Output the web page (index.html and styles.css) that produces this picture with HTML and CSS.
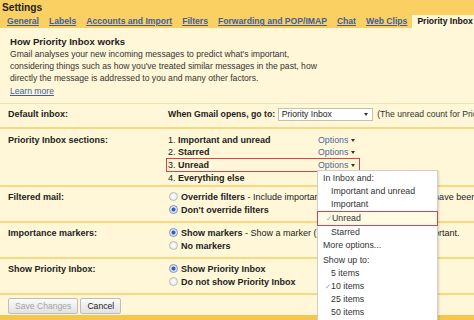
FILE: index.html
```html
<!DOCTYPE html>
<html lang="en">
<head>
    <meta charset="UTF-8">
    <meta name="viewport" content="width=device-width, initial-scale=1.0">
    <title>Settings - Priority Inbox</title>
    <link rel="stylesheet" href="styles.css">
</head>
<body>
<div class="page">
    <div class="header">
        <div class="title">Settings</div>
        <div class="tabs">
            <a class="tab" href="#">General</a>
            <a class="tab" href="#">Labels</a>
            <a class="tab" href="#">Accounts and Import</a>
            <a class="tab" href="#">Filters</a>
            <a class="tab" href="#">Forwarding and POP/IMAP</a>
            <a class="tab" href="#">Chat</a>
            <a class="tab" href="#">Web Clips</a>
            <span class="tab current">Priority Inbox</span>
        </div>
    </div>

    <div class="content">
        <div class="intro">
            <h2>How Priority Inbox works</h2>
            <p>Gmail analyses your new incoming messages to predict what's important, considering things such as how you've treated similar messages in the past, how directly the message is addressed to you and many other factors.</p>
            <a href="#">Learn more</a>
        </div>

        <div class="row default-row">
            <div class="label">Default inbox:</div>
            <div class="value">
                <b class="go-to">When Gmail opens, go to:</b>
                <span class="select">Priority Inbox<span class="caret"></span></span>
                <span class="note">(The unread count for Priority Inbox will be shown in the title bar)</span>
            </div>
        </div>

        <div class="row sections-row">
            <div class="label">Priority Inbox sections:</div>
            <div class="value">
                <div class="section-item">
                    <span class="name">1. <b>Important and unread</b></span>
                    <a class="options" href="#">Options<span class="caret"></span></a>
                </div>
                <div class="section-item">
                    <span class="name">2. <b>Starred</b></span>
                    <a class="options" href="#">Options<span class="caret"></span></a>
                </div>
                <div class="section-item marked">
                    <span class="name">3. <b>Unread</b></span>
                    <a class="options" href="#">Options<span class="caret"></span></a>
                    <div class="menu">
                        <div class="menu-head">In Inbox and:</div>
                        <div class="menu-item">Important and unread</div>
                        <div class="menu-item">Important</div>
                        <div class="menu-item checked selected">Unread</div>
                        <div class="menu-item">Starred</div>
                        <div class="menu-head">More options...</div>
                        <div class="menu-head spaced">Show up to:</div>
                        <div class="menu-item">5 items</div>
                        <div class="menu-item checked">10 items</div>
                        <div class="menu-item">25 items</div>
                        <div class="menu-item">50 items</div>
                    </div>
                </div>
                <div class="section-item">
                    <span class="name">4. <b>Everything else</b></span>
                </div>
            </div>
        </div>

        <div class="row">
            <div class="label">Filtered mail:</div>
            <div class="value">
                <div><span class="radio"></span><b>Override filters</b> - Include important mail in your inbox that may have been filtered out of the inbox</div>
                <div><span class="radio on"></span><b>Don't override filters</b></div>
            </div>
        </div>

        <div class="row">
            <div class="label">Importance markers:</div>
            <div class="value">
                <div><span class="radio on"></span><b>Show markers</b> - Show a marker ( <svg class="marker" width="7" height="7" viewBox="0 0 7 7"><path d="M0 0H4.5L7 3.5L4.5 7H0L2 3.5Z" fill="#f3c13a"/></svg>) by messages marked important.</div>
                <div><span class="radio"></span><b>No markers</b></div>
            </div>
        </div>

        <div class="row">
            <div class="label">Show Priority Inbox:</div>
            <div class="value">
                <div><span class="radio on"></span><b>Show Priority Inbox</b></div>
                <div><span class="radio"></span><b>Do not show Priority Inbox</b></div>
            </div>
        </div>

        <div class="actions">
            <button type="button" class="btn" disabled>Save Changes</button>
            <button type="button" class="btn">Cancel</button>
        </div>
    </div>

    <div class="bottom-bar"></div>
</div>
</body>
</html>
```

FILE: styles.css
```css
body {
    margin: 0;
    font-family: "Liberation Sans", Arial, sans-serif;
    color: #222;
    background: #fff7d7;
}
.page {
    width: 474px;
    height: 320px;
    overflow: hidden;
    display: flex;
    flex-direction: column;
}
.header {
    background: #fad063;
    height: 28px;
    flex-shrink: 0;
}
.title {
    font-size: 10.2px;
    font-weight: bold;
    line-height: 12px;
    height: 13px;
    padding: 2px 0 0 2px;
}
.tabs {
    display: flex;
    height: 13px;
    line-height: 13px;
    padding-left: 2px;
    font-size: 8.6px;
    font-weight: bold;
    white-space: nowrap;
}
.tab {
    padding: 0 5px;
    color: #3f5f9c;
    text-decoration: underline;
}
.tab.current {
    background: #fff7d7;
    color: #111;
    text-decoration: none;
}
.content {
    flex: 1;
    background: #fff7d7;
}
.intro {
    padding: 8px 0 6px 10px;
    border-bottom: 1px solid #f2e2b0;
    font-size: 8.6px;
    line-height: 12px;
}
.intro h2 {
    margin: 0;
    font-size: 9.6px;
    line-height: 12px;
}
.intro p {
    margin: 0;
    width: 322px;
    color: #333;
}
.intro a {
    display: inline-block;
    margin-top: 1px;
    color: #3f5f9c;
}
.row {
    display: flex;
    padding: 4px 0 4px 8px;
    border-bottom: 2px solid #f8d97f;
    font-size: 9px;
    line-height: 13px;
}
.label {
    width: 160px;
    flex-shrink: 0;
    font-weight: bold;
}
.value {
    flex: 1;
    min-width: 0;
    white-space: nowrap;
}
.default-row {
    padding: 3px 0 6px 8px;
    line-height: 14px;
}
.go-to {
    font-size: 8.7px;
}
.select {
    display: inline-block;
    width: 90px;
    height: 11px;
    line-height: 11px;
    padding-left: 3px;
    background: #fff;
    border: 1px solid #c9c1a6;
    font-size: 8.6px;
    vertical-align: middle;
    position: relative;
}
.select .caret {
    position: absolute;
    right: 4px;
    top: 4px;
}
.note {
    font-size: 8.6px;
    margin-left: 2px;
    color: #333;
}
.caret {
    display: inline-block;
    border: 2px solid transparent;
    border-top: 3px solid #333;
    border-bottom: 0;
    margin-left: 3px;
    vertical-align: middle;
}
.sections-row {
    padding: 5px 0 1px 8px;
    line-height: 12px;
}
.section-item {
    display: flex;
    width: 189px;
}
.section-item .name {
    width: 150px;
    flex-shrink: 0;
}
.section-item.marked {
    position: relative;
    width: 191px;
    margin-left: -2px;
    padding-left: 1px;
    border: 1px solid #d8434c;
}
.options {
    color: #4a67a3;
    text-decoration: none;
    font-size: 8.8px;
}
.menu {
    position: absolute;
    left: 150px;
    top: 11px;
    width: 119px;
    height: 160px;
    padding-top: 1px;
    background: #fff;
    border: 1px solid #cfcfcf;
    box-shadow: 1px 1px 2px rgba(0, 0, 0, 0.15);
    font-size: 8.8px;
    line-height: 13px;
    color: #333;
    z-index: 2;
}
.menu-head {
    padding-left: 5px;
}
.menu-head.spaced {
    margin-top: 2px;
}
.menu-item {
    padding-left: 13px;
}
.menu-item.checked {
    padding-left: 7px;
}
.menu-item.checked::before {
    content: "✓";
    display: inline-block;
    width: 6px;
    color: #8ea6cc;
    font-size: 7px;
}
.menu-item.selected {
    margin: 0 -1px;
    line-height: 12px;
    padding-left: 8px;
    border: 1px solid #d8434c;
    background: #fffbe4;
}
.radio {
    display: inline-block;
    width: 7px;
    height: 7px;
    margin: 0 3px 0 1px;
    border: 1px solid #b9b9b9;
    border-radius: 50%;
    background: radial-gradient(circle, #fff 0, #e4e4e4 100%);
    vertical-align: -1px;
}
.radio.on {
    border-color: #7d93bd;
    background: radial-gradient(circle, #2d5fc4 0, #2d5fc4 1.6px, #dfe7f6 2.4px);
}
.marker {
    vertical-align: -1px;
}
.actions {
    display: flex;
    gap: 2px;
    padding: 3px 0 0 8px;
}
.btn {
    height: 16px;
    padding: 0 6px;
    font-family: inherit;
    font-size: 8.6px;
    color: #222;
    background: linear-gradient(#fbfbfb, #e2e2e2);
    border: 1px solid #bdbdbd;
    border-radius: 2px;
}
.btn:disabled {
    color: #a5a5a5;
}
.bottom-bar {
    height: 5px;
    flex-shrink: 0;
    background: #f6c54d;
}
```
